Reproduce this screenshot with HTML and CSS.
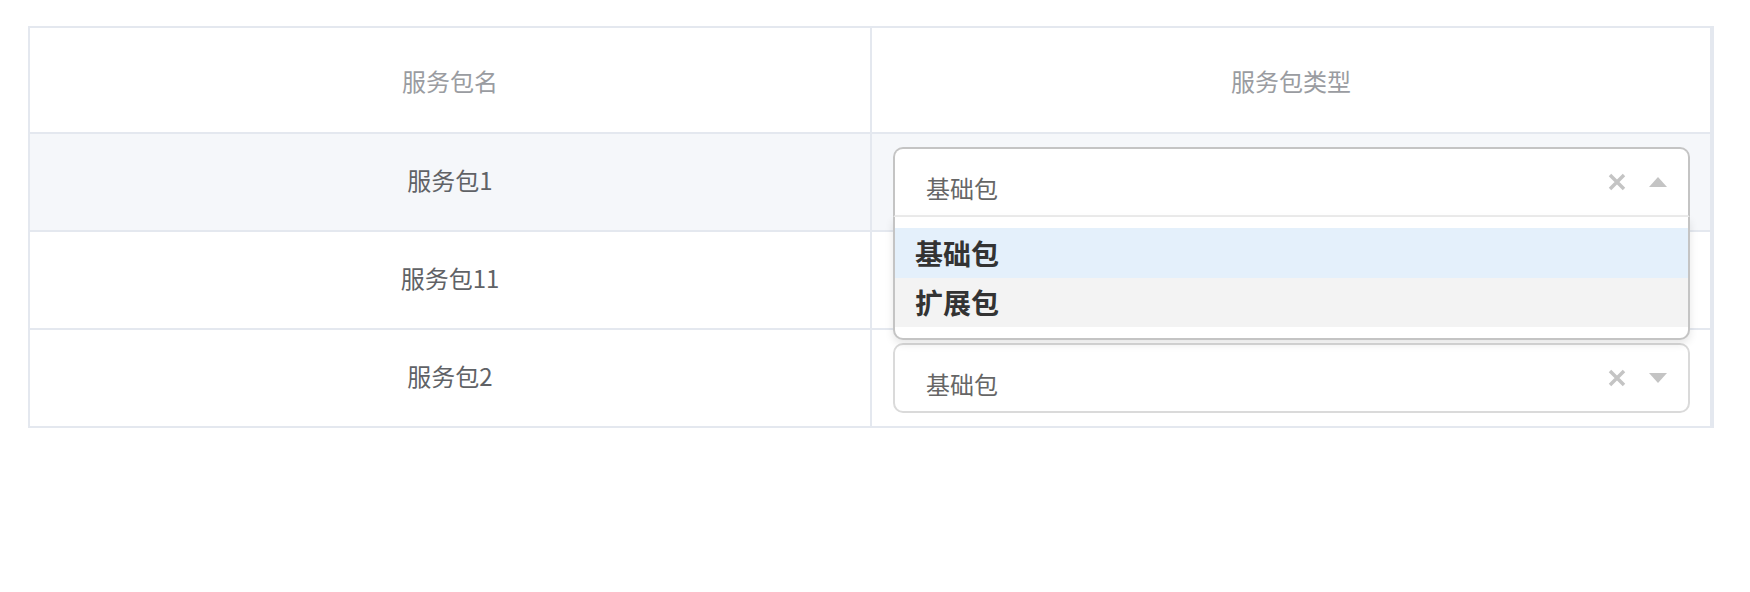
FILE: index.html
```html
<!DOCTYPE html>
<html lang="zh-CN">
<head>
    <meta charset="UTF-8">
    <meta name="viewport" content="width=device-width, initial-scale=1.0">
    <title>服务包列表</title>
    <link rel="stylesheet" href="styles.css">
</head>
<body>
    <div class="page">
        <table class="pkg-table">
            <colgroup>
                <col class="col-name">
                <col class="col-type">
            </colgroup>
            <thead>
                <tr>
                    <th>服务包名</th>
                    <th>服务包类型</th>
                </tr>
            </thead>
            <tbody>
                <tr class="hover-row">
                    <td>服务包1</td>
                    <td class="type-cell">
                        <div class="v-select open">
                            <div class="vs-toggle">
                                <span class="vs-selected">基础包</span>
                                <span class="vs-actions">
                                    <svg class="vs-clear" width="18" height="18" viewBox="0 0 18 18"><path d="M2 2 L16 16 M16 2 L2 16" /></svg>
                                    <svg class="vs-indicator" width="18" height="10" viewBox="0 0 18 10"><polygon points="0,10 9,0 18,10" /></svg>
                                </span>
                            </div>
                            <ul class="vs-menu">
                                <li class="vs-option highlight">基础包</li>
                                <li class="vs-option hover">扩展包</li>
                            </ul>
                        </div>
                    </td>
                </tr>
                <tr>
                    <td>服务包11</td>
                    <td class="type-cell"></td>
                </tr>
                <tr>
                    <td>服务包2</td>
                    <td class="type-cell">
                        <div class="v-select">
                            <div class="vs-toggle">
                                <span class="vs-selected">基础包</span>
                                <span class="vs-actions">
                                    <svg class="vs-clear" width="18" height="18" viewBox="0 0 18 18"><path d="M2 2 L16 16 M16 2 L2 16" /></svg>
                                    <svg class="vs-indicator" width="18" height="10" viewBox="0 0 18 10"><polygon points="0,0 18,0 9,10" /></svg>
                                </span>
                            </div>
                        </div>
                    </td>
                </tr>
            </tbody>
        </table>
    </div>
</body>
</html>
```

FILE: styles.css
```css
body {
    margin: 0;
    background: #fff;
    font-family: "Noto Sans CJK SC", "Noto Sans", sans-serif;
}
.page {
    padding: 26px 36px 0 28px;
}
.pkg-table {
    width: 100%;
    table-layout: fixed;
    border-collapse: separate;
    border-spacing: 0;
    border-top: 2px solid #e4e8ef;
    border-left: 2px solid #e4e8ef;
    border-right: 4px solid #e4e8ef;
}
.col-name {
    width: 842px;
}
.pkg-table th,
.pkg-table td {
    text-align: center;
    vertical-align: middle;
    padding: 0;
    border-bottom: 2px solid #e4e8ef;
}
.pkg-table th:first-child,
.pkg-table td:first-child {
    border-right: 2px solid #e4e8ef;
}
.pkg-table th {
    height: 104px;
    font-size: 24px;
    font-weight: normal;
    color: #9a9ca1;
}
.pkg-table td {
    height: 96px;
    font-size: 24px;
    color: #606266;
}
.pkg-table td:first-child {
    height: 91px;
    padding-bottom: 5px;
}
.hover-row td {
    background: #f5f7fa;
}
.type-cell {
    padding: 0 20px 0 21px !important;
    text-align: left !important;
}
.v-select {
    position: relative;
}
.vs-toggle {
    box-sizing: border-box;
    height: 70px;
    display: flex;
    align-items: center;
    padding: 0 21px 0 31px;
    background: #fff;
    border: 2px solid #dadada;
    border-radius: 10px;
}
.vs-selected {
    flex: 1;
    padding-top: 12px;
    line-height: 28px;
    font-size: 24px;
    color: #666;
}
.vs-actions {
    display: flex;
    align-items: center;
    gap: 23px;
}
.vs-clear path {
    stroke: #c4c4c4;
    stroke-width: 3.5;
}
.vs-indicator polygon {
    fill: #c4c4c4;
}
.open .vs-toggle {
    border-color: #c4c4c4;
    border-bottom-color: #ececec;
    border-radius: 10px 10px 0 0;
}
.vs-menu {
    position: absolute;
    top: 100%;
    left: 0;
    right: 0;
    z-index: 10;
    margin: 0;
    padding: 11px 0 11px;
    list-style: none;
    background: #fff;
    border: 2px solid #c4c4c4;
    border-top: none;
    border-radius: 0 0 10px 10px;
    box-shadow: 0 4px 8px rgba(0, 0, 0, 0.1);
}
.vs-option {
    height: 50px;
    line-height: 50px;
    padding: 0 20px;
    font-size: 28px;
    font-weight: bold;
    color: #333;
}
.vs-option.highlight {
    background: #e4f0fb;
}
.vs-option.hover {
    height: 49px;
    line-height: 49px;
    background: #f3f3f3;
}
```
